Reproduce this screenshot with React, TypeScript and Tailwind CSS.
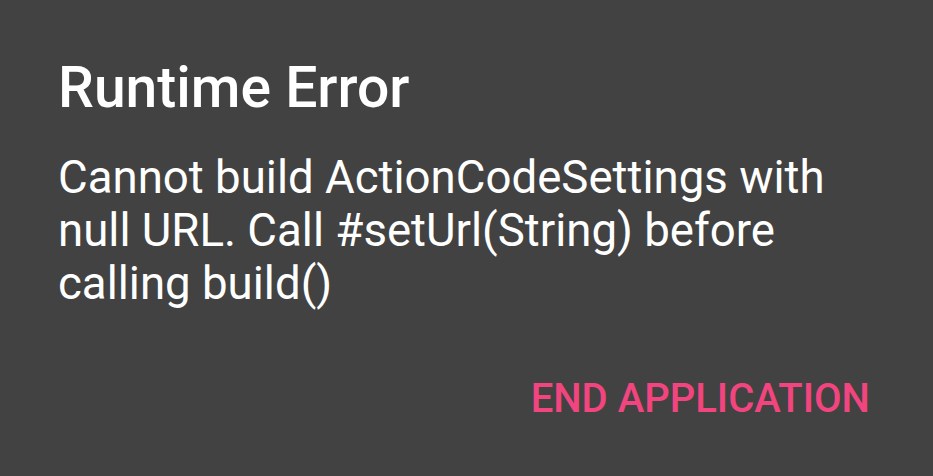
import React from 'react';

export default function App() {
  return (
    <div className="w-[933px] h-[476px] bg-[#424242] font-['Roboto',sans-serif] flex flex-col px-[58px] pt-[54px]">
      <h1 className="text-white font-medium text-[57px] leading-[67px]">Runtime Error</h1>
      <p className="text-white text-[45.6px] leading-[53px] mt-[30px] pr-[40px]">
        Cannot build ActionCodeSettings with null URL. Call #setUrl(String) before calling build()
      </p>
      <div className="flex justify-end mt-[65px] pr-[5px]">
        <button className="text-[#f2457f] font-medium text-[40px] leading-[47px] uppercase">End Application</button>
      </div>
    </div>
  );
}
